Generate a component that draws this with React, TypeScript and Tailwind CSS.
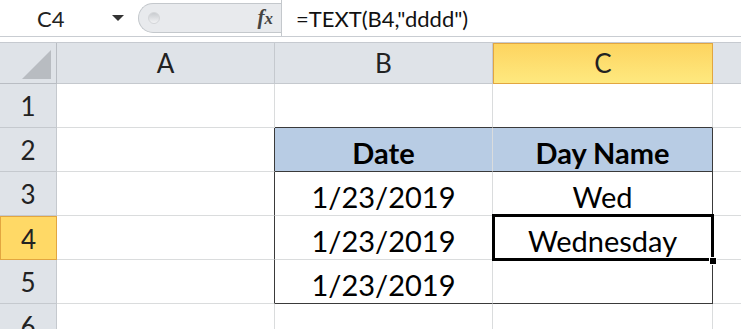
import React from 'react'

// Column headers: A, B, C and an unlabeled sliver of D at the right edge
const COLS = ['A', 'B', 'C', '']

type Cell = { text?: string; bold?: boolean }

const ROWS: Cell[][] = [
  [{}, {}, {}, {}],
  [{}, { text: 'Date', bold: true }, { text: 'Day Name', bold: true }, {}],
  [{}, { text: '1/23/2019' }, { text: 'Wed' }, {}],
  [{}, { text: '1/23/2019' }, { text: 'Wednesday' }, {}],
  [{}, { text: '1/23/2019' }, {}, {}],
  [{}, {}, {}, {}],
]

const font = { fontFamily: 'Lato, "Noto Sans", sans-serif' }

function cellClass(r: number, c: number) {
  // r: 1-based row, c: 0=A,1=B,2=C,3=D
  const inTable = r >= 2 && r <= 5
  const parts = ['flex items-end justify-center pb-[4px] border-r border-b']
  if (inTable && (c === 0 || c === 2)) parts.push('border-r-[#3a3a3a]')
  else parts.push('border-r-[#dadcdd]')
  if ((r === 1 || r === 2 || r === 5) && (c === 1 || c === 2)) parts.push('border-b-[#3a3a3a]')
  else parts.push('border-b-[#dadcdd]')
  if (r === 2 && (c === 1 || c === 2)) parts.push('bg-[#b8cce4]')
  else parts.push('bg-white')
  return parts.join(' ')
}

export default function App() {
  return (
    <div className="w-[741px] h-[329px] overflow-hidden bg-white" style={font}>
      {/* Formula bar */}
      <div className="flex h-[37px] bg-white border-b border-[#c9cdd2]">
        <div className="flex w-[138px] items-center">
          <span className="w-[100px] pl-[37px] text-[22px] text-[#222]">C4</span>
          <span className="ml-[12px] h-0 w-0 border-x-[6px] border-t-[6px] border-x-transparent border-t-[#333]" />
        </div>
        <div className="mt-[3px] mb-[3px] flex w-[143px] items-center rounded-l-full border border-r-0 border-[#c4c8cc] bg-[#e8eaed]">
          <span className="ml-[9px] h-[12px] w-[12px] rounded-full bg-gradient-to-b from-[#c9ccd0] to-[#f2f3f5] border border-[#d4d6d9]" />
          <span className="ml-auto mr-[8px] text-[21px] font-bold italic text-[#444]" style={{ fontFamily: '"Liberation Serif", serif' }}>
            f<span className="text-[17px]">x</span>
          </span>
        </div>
        <div className="flex flex-1 items-center border-l border-[#c4c8cc] pl-[14px] text-[22px] text-[#111]">
          =TEXT(B4,"dddd")
        </div>
      </div>
      <div className="h-[6px] bg-white border-b border-[#c6cad0]" />

      {/* Grid */}
      <div className="relative grid grid-cols-[57px_218px_218px_220px_220px] grid-rows-[41px_44px_44px_44px_44px_44px_44px]">
        {/* corner */}
        <div className="relative border-r border-b border-[#b9bdc3] bg-[#dfe3e8]">
          <svg className="absolute right-[5px] bottom-[4px]" width="29" height="29" viewBox="0 0 29 29">
            <polygon points="29,0 29,29 0,29" fill="#b8bcc1" />
          </svg>
        </div>
        {COLS.map((col, i) =>
          col === 'C' ? (
            <div
              key={i}
              className="flex items-center justify-center border border-[#e2a640] bg-gradient-to-b from-[#fdd45f] to-[#fee97f] text-[26px] text-[#222]"
            >
              {col}
            </div>
          ) : (
            <div
              key={i}
              className="flex items-center justify-center border-r border-b border-[#c5c9ce] bg-[#dfe3e8] text-[26px] text-[#222]"
            >
              {col}
            </div>
          ),
        )}

        {ROWS.map((row, i) => {
          const r = i + 1
          return (
            <React.Fragment key={r}>
              {r === 4 ? (
                <div className="flex items-center justify-center border border-[#e2a640] bg-[#ffd966] pt-[2px] text-[26px] text-[#222]">
                  {r}
                </div>
              ) : (
                <div className="flex items-center justify-center border-r border-b border-[#c5c9ce] bg-[#dfe3e8] pt-[2px] text-[26px] text-[#222]">
                  {r}
                </div>
              )}
              {row.map((cell, c) => (
                <div key={c} className={cellClass(r, c)}>
                  {cell.text && (
                    <span className={cell.bold ? 'text-[29px] leading-none font-bold text-black' : 'text-[29px] leading-none text-black'}>
                      {cell.text}
                    </span>
                  )}
                </div>
              ))}
            </React.Fragment>
          )
        })}

        {/* Active cell C4 */}
        <div className="pointer-events-none absolute left-[492px] top-[171px] h-[47px] w-[222px] border-[3px] border-black" />
        <div className="pointer-events-none absolute left-[709px] top-[214px] h-[8px] w-[8px] border border-white bg-black" />
      </div>
    </div>
  )
}
